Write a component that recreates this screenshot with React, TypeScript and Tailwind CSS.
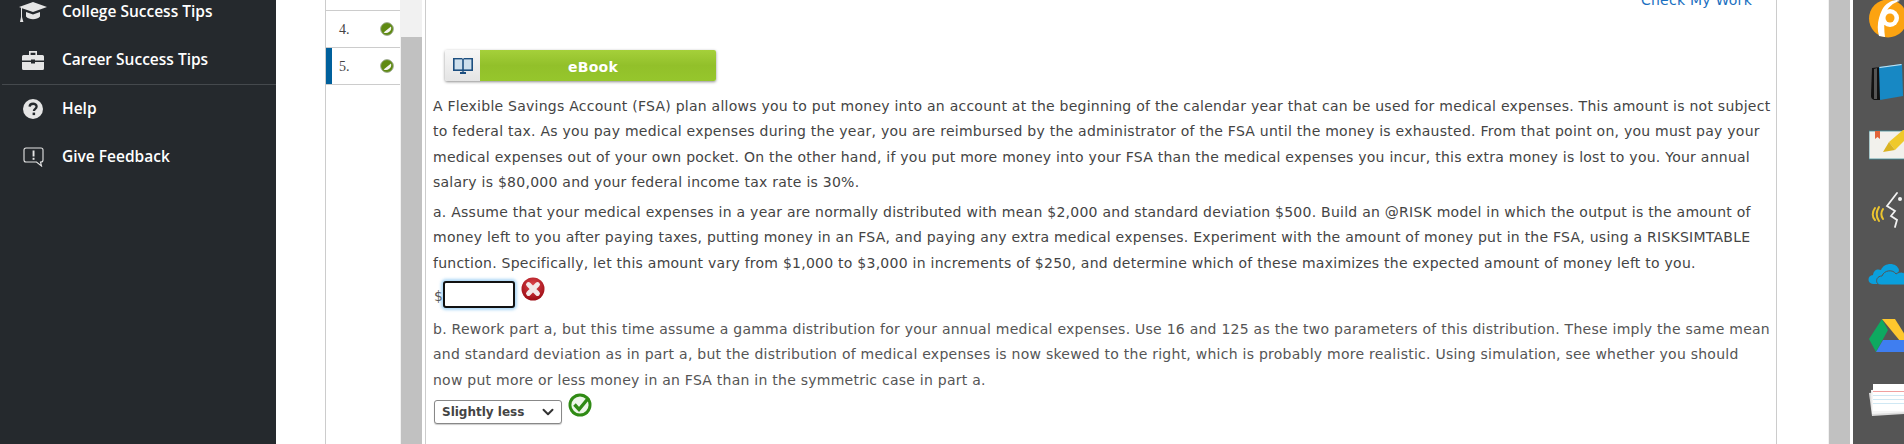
import React from 'react';
import { ChevronDown } from 'lucide-react';

const GradedDot = () => (
    <svg viewBox="0 0 14 14" className="w-[14px] h-[14px]">
        <circle cx="7" cy="7" r="6.4" fill="#5f8a12" stroke="#a3ad9c" strokeWidth="0.9" />
        <path d="M3.6 10.4 L11 4.4 A5.2 5.2 0 0 1 3.6 10.4 Z" fill="#f6f6f2" />
    </svg>
);

const QuestionRow = ({ label, active }: { label: string; active?: boolean }) => (
    <div className="flex items-center h-[37px] border-b border-[#cccccc]">
        <div className={`w-[6px] h-full ${active ? 'bg-[#00609c]' : ''}`} />
        <span className="ml-[7px] w-[41px] font-['Liberation_Serif',serif] text-[14px] text-[#444444]">{label}</span>
        <GradedDot />
    </div>
);

const NavItem = ({ icon, label, className }: { icon: React.ReactNode; label: string; className: string }) => (
    <div className={`flex items-center ${className}`}>
        <div className="w-[62px] flex justify-center pl-[4px] shrink-0 text-[#e5e5e5]">{icon}</div>
        <span className="font-['Open_Sans',sans-serif] font-semibold text-[15.5px] text-white">{label}</span>
    </div>
);

const Sidebar = () => (
    <aside className="w-[276px] shrink-0 bg-[#25292d]">
        <NavItem
            className="h-[24px]"
            label="College Success Tips"
            icon={
                <svg viewBox="0 0 28 20" className="w-[28px] h-[20px]" fill="currentColor">
                    <path d="M0 5 L14 0 L28 5 L14 10 L3 6.2 L3 15 L4.4 20 L1 20 L2 15 L2 5.8 Z" />
                    <path d="M7 10 L14 12.6 L21 10 L21 14.5 C18 18 10 18 7 14.5 Z" />
                </svg>
            }
        />
        <NavItem
            className="h-[48px] mt-[12px]"
            label="Career Success Tips"
            icon={
                <svg viewBox="0 0 22 19" className="w-[22px] h-[19px]" fill="currentColor">
                    <path d="M7 0 H15 V4 H13.4 V1.8 H8.6 V4 H7 Z" />
                    <path d="M1.5 4 H20.5 A1.5 1.5 0 0 1 22 5.5 V9.5 H13 V8.4 H9 V9.5 H0 V5.5 A1.5 1.5 0 0 1 1.5 4 Z" />
                    <path d="M0 11 H9 V12.6 H13 V11 H22 V17.5 A1.5 1.5 0 0 1 20.5 19 H1.5 A1.5 1.5 0 0 1 0 17.5 Z" />
                </svg>
            }
        />
        <div className="h-px bg-[#45494d] ml-[2px]" />
        <NavItem
            className="h-[48px]"
            label="Help"
            icon={
                <svg viewBox="0 0 20 20" className="w-[20px] h-[20px]">
                    <circle cx="10" cy="10" r="10" fill="currentColor" />
                    <path d="M6.6 7.6 C6.8 3.8 13.6 3.8 13.6 7.6 C13.6 10 10.9 9.8 10.9 12" fill="none" stroke="#25292d" strokeWidth="2.3" />
                    <rect x="9.6" y="13.6" width="2.5" height="2.5" fill="#25292d" />
                </svg>
            }
        />
        <NavItem
            className="h-[48px]"
            label="Give Feedback"
            icon={
                <svg viewBox="0 0 21 20" className="w-[21px] h-[20px]" fill="none" stroke="currentColor">
                    <path d="M3 1 H18 A2 2 0 0 1 20 3 V13 A2 2 0 0 1 18 15 H17.5 L18.5 19 L13.5 15 H3 A2 2 0 0 1 1 13 V3 A2 2 0 0 1 3 1 Z" strokeWidth="1.1" />
                    <rect x="9.6" y="3.5" width="1.9" height="6" fill="currentColor" stroke="none" />
                    <rect x="9.6" y="10.8" width="1.9" height="2" fill="currentColor" stroke="none" />
                </svg>
            }
        />
    </aside>
);

const QuestionList = () => (
    <div className="w-[75px] shrink-0 ml-[49px] border-l border-[#cccccc] flex">
        <div className="w-[74px]">
            <div className="h-[11px] border-b border-[#cccccc]" />
            <QuestionRow label="4." />
            <QuestionRow label="5." active />
        </div>
    </div>
);

const Scrollbar = ({ thumbClass }: { thumbClass: string }) => (
    <div className="w-[22px] shrink-0 bg-[#f1f1f1] pl-px">
        <div className={`bg-[#c1c1c1] ${thumbClass}`} />
    </div>
);

const EbookButton = () => (
    <div className="flex w-[271px] h-[31px] rounded-[2px] shadow-[0_1px_3px_rgba(0,0,0,0.45)]">
        <div className="w-[35px] flex items-center justify-center bg-gradient-to-b from-[#f7f7f7] to-[#e4e4e4] rounded-l-[2px]">
            <svg viewBox="0 0 20 17" className="w-[20px] h-[17px]">
                <path d="M0 1 H9 L10 2 L11 1 H20 V14 H11.5 L10 15 L8.5 14 H0 Z" fill="#1d4f80" />
                <rect x="1.6" y="2.4" width="7.6" height="10" fill="#cfe0ec" />
                <rect x="10.8" y="2.4" width="7.6" height="10" fill="#cfe0ec" />
                <rect x="7" y="15" width="6" height="2" fill="#1d4f80" />
            </svg>
        </div>
        <div className="flex-1 flex items-center justify-center pr-[10px] pt-[4px] rounded-r-[2px] bg-gradient-to-b from-[#a5d03a] via-[#92c02a] to-[#96c62c] font-['DejaVu_Sans',sans-serif] font-bold text-[14px] tracking-[0.25px] text-white">
            eBook
        </div>
    </div>
);

const IconDock = () => (
    <div className="ml-[3px] flex-1 bg-[#555555] overflow-hidden pl-[13px]">
        {/* orange p logo */}
        <svg viewBox="0 0 44 38" className="w-[44px] h-[38px] block">
            <circle cx="22" cy="18.5" r="19" fill="#fca311" />
            <path d="M13 36 C10 26 13 16 16 10 C20 2 30 -2 34 1 C28 2 20 8 19 16 C18 24 18 30 19 37 Z" fill="#ffffff" />
            <circle cx="24" cy="18" r="9" fill="#ffffff" />
            <circle cx="24" cy="18" r="4.5" fill="#fca311" />
        </svg>
        {/* blue book */}
        <svg viewBox="0 0 44 40" className="w-[44px] h-[40px] block mt-[25px] ml-[3px]">
            <path d="M3 5 L12 4 L12 37 L5 37 C3 36 2 35 2 33 Z" fill="#111111" />
            <path d="M5 6 L8 5 L8 36 L5 36 Z" fill="#555555" />
            <path d="M10 4 L33 1 L34 33 L11 37 Z" fill="#1788c4" />
            <path d="M10 4 L32 1 L33 2 L11 5 Z" fill="#bfe0f0" />
        </svg>
        {/* note with highlighter */}
        <svg viewBox="0 0 44 32" className="w-[44px] h-[32px] block mt-[27px] ml-[3px]">
            <rect x="0" y="1" width="38" height="28" fill="#f2f1ec" stroke="#3f8f9c" strokeWidth="0.8" />
            <path d="M6 1 H11 V9 L8.5 7 L6 9 Z" fill="#e2643a" />
            <path d="M20 12 L34 0 L36 0 L36 10 L26 20 Z" fill="#efc92b" />
            <path d="M20 12 L26 20 L14 22 Z" fill="#d9b321" />
        </svg>
        {/* voice wave */}
        <svg viewBox="0 0 44 36" className="w-[44px] h-[36px] block mt-[30px] ml-[4px]" fill="none" strokeLinecap="round">
            <path d="M5 16 C2 20 2 25 5 28 M9 15 C6 20 6 25 9 29 M13 17 C11 20 11 24 13 27" stroke="#ecc52f" strokeWidth="2" />
            <path d="M27 1 L17 14 L25 19 L21 24 L27 28 L25 35" stroke="#f2f2f2" strokeWidth="1.8" />
            <circle cx="30" cy="7" r="2" fill="#f2f2f2" />
        </svg>
        {/* cloud */}
        <svg viewBox="0 0 44 26" className="w-[44px] h-[26px] block mt-[33px] ml-[2px]">
            <path d="M5 23 C-1 23 -1 14 5 14 C6 8 10 8 13 9 C16 1 29 1 31 9 L28 23 Z" fill="#0a9fdc" />
            <path d="M13 24 C7 24 7 15 14 15 C16 9 25 8 28 13 C33 9 39 12 38 16 C44 15 44 24 40 24 Z" fill="#0a9fdc" stroke="#555555" strokeWidth="1" />
        </svg>
        {/* drive */}
        <svg viewBox="0 0 44 34" className="w-[44px] h-[34px] block mt-[32px] ml-[3px]">
            <path d="M13 0 L0 20 L7 33 L19 11 Z" fill="#0da960" />
            <path d="M13 0 L26 0 L40 22 L31 22 Z" fill="#fdc72e" />
            <path d="M7 33 L14 21 L44 21 L37 33 Z" fill="#3f7ef0" />
        </svg>
        {/* index cards */}
        <svg viewBox="0 0 44 32" className="w-[44px] h-[32px] block mt-[31px] ml-[3px]">
            <path d="M0 9 L36 5 L37 30 L3 32 Z" fill="#dddddd" />
            <path d="M2 6 L40 4 L40 28 L3 30 Z" fill="#f5f5f5" />
            <rect x="4" y="0" width="40" height="27" fill="#ffffff" />
            <rect x="4" y="7" width="40" height="1" fill="#f0a0a0" />
            <rect x="4" y="11" width="40" height="1" fill="#cfe8f4" />
            <rect x="4" y="15" width="40" height="1" fill="#cfe8f4" />
            <rect x="4" y="19" width="40" height="1" fill="#cfe8f4" />
        </svg>
    </div>
);

const Wrong = () => (
    <svg viewBox="0 0 24 24" className="w-[24px] h-[24px]">
        <defs>
            <radialGradient id="wrongFill" cx="50%" cy="35%" r="65%">
                <stop offset="0%" stopColor="#e0484e" />
                <stop offset="100%" stopColor="#9c0c14" />
            </radialGradient>
        </defs>
        <circle cx="12" cy="12" r="11.5" fill="url(#wrongFill)" />
        <path d="M7.5 7.5 L16.5 16.5 M16.5 7.5 L7.5 16.5" stroke="#f3e9e9" strokeWidth="4.8" strokeLinecap="round" />
    </svg>
);

const Right = () => (
    <svg viewBox="0 0 24 24" className="w-[24px] h-[24px]">
        <circle cx="12" cy="12" r="11.5" fill="#2f8a14" />
        <circle cx="12" cy="12" r="8.6" fill="#eef6ea" />
        <path d="M6.5 11.5 L11 16.5 L20.5 5" fill="none" stroke="#2f8a14" strokeWidth="3.4" />
    </svg>
);

const Content = () => (
    <main className="w-[1352px] shrink-0 ml-[3px] border-x border-[#cccccc] font-['DejaVu_Sans',sans-serif] text-[14px] tracking-[0.25px] leading-[25.3px] text-[#444444] pl-[7px]">
        <div className="h-[53px] text-right pr-[24px] -mt-[8px] text-[#1a6fc0] leading-[16px]">Check My Work</div>
        <div className="ml-[12px] mt-[5px]">
            <EbookButton />
        </div>
        <div className="mt-[13px]">
            <p>A Flexible Savings Account (FSA) plan allows you to put money into an account at the beginning of the calendar year that can be used for medical expenses. This amount is not subject</p>
            <p>to federal tax. As you pay medical expenses during the year, you are reimbursed by the administrator of the FSA until the money is exhausted. From that point on, you must pay your</p>
            <p>medical expenses out of your own pocket. On the other hand, if you put more money into your FSA than the medical expenses you incur, this extra money is lost to you. Your annual</p>
            <p>salary is $80,000 and your federal income tax rate is 30%.</p>
        </div>
        <div className="mt-[5px]">
            <p>a. Assume that your medical expenses in a year are normally distributed with mean $2,000 and standard deviation $500. Build an @RISK model in which the output is the amount of</p>
            <p>money left to you after paying taxes, putting money in an FSA, and paying any extra medical expenses. Experiment with the amount of money put in the FSA, using a RISKSIMTABLE</p>
            <p>function. Specifically, let this amount vary from $1,000 to $3,000 in increments of $250, and determine which of these maximizes the expected amount of money left to you.</p>
        </div>
        <div className="flex items-start h-[32px] mt-[1px]">
            <span className="mt-[7px] ml-px w-[9px] text-[#555555]">$</span>
            <div className="mt-[4px] w-[72px] h-[27px] rounded-[3px] border-2 border-[#111111] bg-white shadow-[0_0_3px_2px_rgba(120,190,240,0.6)]" />
            <div className="ml-[6px]"><Wrong /></div>
        </div>
        <div className="mt-[8px] text-[#555555]">
            <p>b. Rework part a, but this time assume a gamma distribution for your annual medical expenses. Use 16 and 125 as the two parameters of this distribution. These imply the same mean</p>
            <p>and standard deviation as in part a, but the distribution of medical expenses is now skewed to the right, which is probably more realistic. Using simulation, see whether you should</p>
            <p>now put more or less money in an FSA than in the symmetric case in part a.</p>
        </div>
        <div className="flex items-start ml-px">
            <div className="mt-[7px] w-[128px] h-[24px] flex items-center justify-between pl-[7px] pr-[4px] rounded-[3px] border border-[#888888] bg-white shadow-[0_1px_1px_rgba(0,0,0,0.2)] font-bold text-[12px] tracking-normal leading-none text-[#444444]">
                <span>Slightly less</span>
                <ChevronDown className="w-[18px] h-[18px] text-[#333333]" strokeWidth={2.6} />
            </div>
            <div className="ml-[6px]"><Right /></div>
        </div>
    </main>
);

const App: React.FC = () => {
    return (
        <div className="flex w-[1904px] h-[444px] overflow-hidden bg-white">
            <Sidebar />
            <QuestionList />
            <Scrollbar thumbClass="h-[407px] mt-[37px]" />
            <Content />
            <div className="w-[51px] shrink-0" />
            <Scrollbar thumbClass="h-[444px]" />
            <IconDock />
        </div>
    );
};

export default App;
